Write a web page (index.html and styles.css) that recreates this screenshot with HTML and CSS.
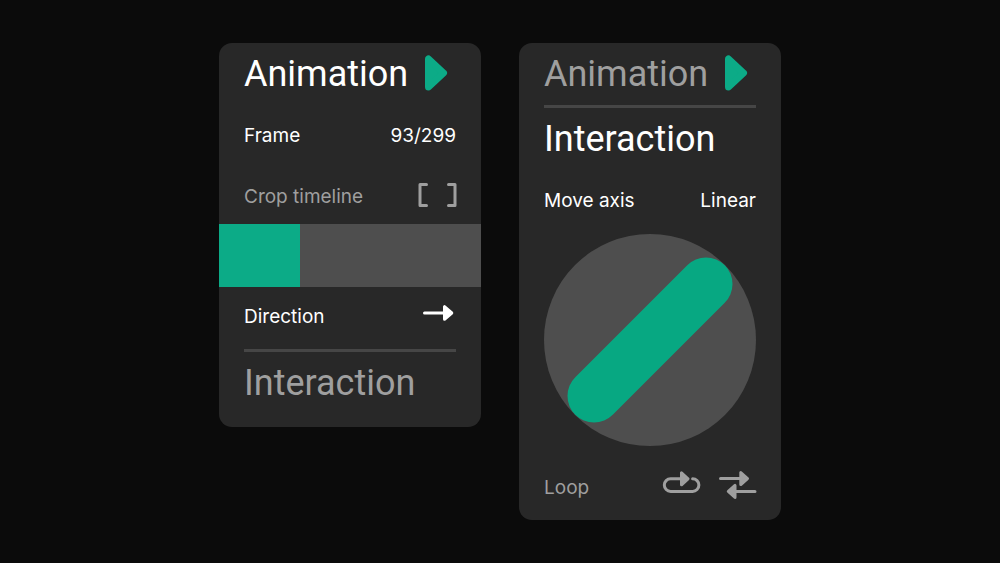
FILE: index.html
```html
<!DOCTYPE html>
<html lang="en">
<head>
  <meta charset="UTF-8">
  <meta name="viewport" content="width=device-width, initial-scale=1">
  <title>Animation &amp; Interaction</title>
  <link rel="stylesheet" href="styles.css">
</head>
<body>
  <main class="panels">

    <!-- Animation tab open -->
    <section class="panel">
      <div class="panel-header">
        <h2><button type="button" class="tab active">Animation</button></h2>
        <button type="button" class="play" aria-label="Play">
          <svg width="24" height="38" viewBox="0 0 24 38"><path d="M4.500 4v28L19.500 18z"/></svg>
        </button>
      </div>
      <div class="panel-body">
        <div class="row">
          <span>Frame</span>
          <span>93/299</span>
        </div>
        <div class="row muted">
          <label for="timeline">Crop timeline</label>
          <div class="icons">
            <button type="button" class="icon" aria-label="Crop start and end">
              <svg width="38" height="28" viewBox="0 0 38 28"><path d="M8.500 4.500H2v21h6.500M30.500 4.500h6.500v21h-6.500"/></svg>
            </button>
          </div>
        </div>
        <input type="range" id="timeline" class="timeline" min="0" max="299" value="93" style="--played: 31%">
        <div class="row">
          <span>Direction</span>
          <div class="icons">
            <button type="button" class="icon" aria-label="Play forwards">
              <svg width="38" height="28" viewBox="0 0 38 28"><path d="M6.500 13h20"/><path class="head" d="M26.500 6.700v12.600L33.800 13z"/></svg>
            </button>
          </div>
        </div>
      </div>
      <hr>
      <div class="panel-header">
        <h2><button type="button" class="tab">Interaction</button></h2>
      </div>
    </section>

    <!-- Interaction tab open -->
    <section class="panel">
      <div class="panel-header">
        <h2><button type="button" class="tab">Animation</button></h2>
        <button type="button" class="play" aria-label="Play">
          <svg width="24" height="38" viewBox="0 0 24 38"><path d="M4.500 4v28L19.500 18z"/></svg>
        </button>
      </div>
      <hr>
      <div class="panel-header">
        <h2><button type="button" class="tab active">Interaction</button></h2>
      </div>
      <div class="panel-body">
        <div class="row">
          <span>Move axis</span>
          <span>Linear</span>
        </div>
        <svg class="dial" viewBox="0 0 212 212" role="img" aria-label="Move axis, 45 degrees">
          <circle cx="106" cy="106" r="106"/>
          <path d="M50 162L162 50"/>
        </svg>
        <div class="row muted">
          <span>Loop</span>
          <div class="icons">
            <button type="button" class="icon" aria-label="Repeat">
              <svg width="38" height="28" viewBox="0 0 38 28"><path d="M19 7.800H8.600a6.300 6.300 0 0 0 0 12.600h22a6.300 6.300 0 0 0 0-12.600"/><path class="head" d="M19.500 1.800v12L26 7.800z"/></svg>
            </button>
            <button type="button" class="icon" aria-label="Back and forth">
              <svg width="38" height="28" viewBox="0 0 38 28"><path d="M2.500 7.600h20M17 20.400h20"/><path class="head" d="M22.800 1.600v12L29.500 7.600zM17 14.400v12l-6.700-6z"/></svg>
            </button>
          </div>
        </div>
      </div>
    </section>

  </main>
</body>
</html>
```

FILE: styles.css
```css
* {
  box-sizing: border-box;
}
body {
  margin: 0;
  min-height: 100vh;
  display: grid;
  place-content: center;
  background: #0b0b0b;
  color: #fff;
  font-family: Inter, "Liberation Sans", sans-serif;
  font-size: 19px;
}
button {
  padding: 0;
  border: 0;
  background: none;
  color: inherit;
  font: inherit;
  cursor: pointer;
}
svg {
  display: block;
  overflow: visible;
}

/* Two panels side by side */
.panels {
  display: flex;
  flex-wrap: wrap;
  align-items: flex-start;
  justify-content: center;
  gap: 38px;
}
.panel {
  width: 262px;
  max-width: 100%;
  overflow: hidden;
  border-radius: 13px;
  background: #282828;
}
.panel > .panel-header:last-child {
  margin-bottom: 13px;
}

/* Big section titles */
.panel-header {
  display: flex;
  align-items: center;
  gap: 16px;
  height: 62px;
  padding: 0 25px;
}
h2 {
  margin: 0;
  font-family: Roboto, Inter, sans-serif;
  font-size: 36px;
  font-weight: 450;
  line-height: 44px;
}
.tab {
  color: #9f9f9f;
}
.tab.active {
  color: #fff;
}
.play path {
  fill: #0cab87;
  stroke: #0cab87;
  stroke-width: 7;
  stroke-linejoin: round;
}
hr {
  height: 3px;
  margin: 0 25px;
  border: 0;
  background: #464646;
}

/* Label on the left, value or icons on the right */
.panel-body {
  padding: 3px 0 5px;
}
.row {
  display: flex;
  align-items: center;
  justify-content: space-between;
  height: 55px;
  margin-bottom: 6px;
  padding: 0 25px;
}
.row:last-child {
  margin-bottom: 0;
}
.row + .timeline {
  margin-top: -6px;
}
.muted {
  color: #9f9f9f;
}
.icons {
  display: flex;
  gap: 18px;
  padding-bottom: 6px;
}
.icon path {
  fill: none;
  stroke: currentColor;
  stroke-width: 3;
  stroke-linecap: round;
  stroke-linejoin: round;
}
.icon .head {
  fill: currentColor;
}

/* Full width timeline, filled up to the current frame */
.timeline {
  display: block;
  width: 100%;
  height: 63px;
  margin: 0 0 2px;
  appearance: none;
  background: linear-gradient(to right, #0cab87 var(--played), #4e4e4e var(--played));
}
.timeline::-webkit-slider-thumb {
  appearance: none;
  width: 1px;
  height: 63px;
  background: transparent;
}

/* Round axis picker */
.dial {
  width: calc(100% - 50px);
  margin: 0 25px 14px;
}
.dial circle {
  fill: #4e4e4e;
}
.dial path {
  stroke: #07a882;
  stroke-width: 53;
  stroke-linecap: round;
}
```
